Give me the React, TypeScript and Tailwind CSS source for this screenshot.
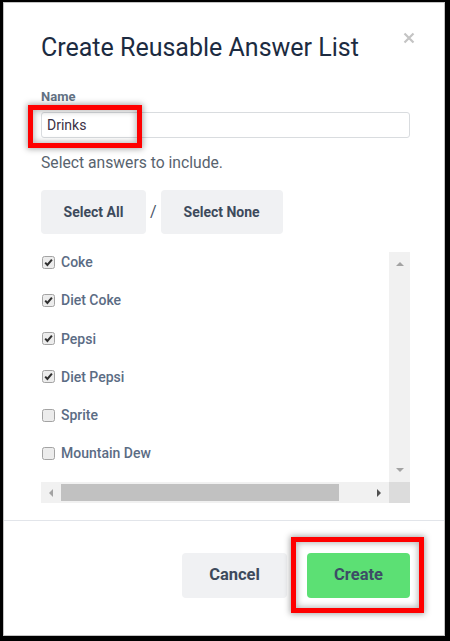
import React from "react";

const answers = [
  { label: "Coke", checked: true },
  { label: "Diet Coke", checked: true },
  { label: "Pepsi", checked: true },
  { label: "Diet Pepsi", checked: true },
  { label: "Sprite", checked: false },
  { label: "Mountain Dew", checked: false },
];

const Checkbox = ({ checked }: { checked: boolean }) => (
  <svg width="13" height="13" viewBox="0 0 13 13" className="shrink-0">
    <rect x="0.5" y="0.5" width="12" height="12" rx="2" fill="#ececec" stroke="#a3a3a3" />
    {checked && (
      <path d="M3.2 6.6 L5.4 9 L9.9 3.6" stroke="#2f2f2f" strokeWidth="2" fill="none" />
    )}
  </svg>
);

const App = () => {
  return (
    <div className="relative w-[450px] h-[641px] bg-black pl-[3px] pr-[5px] pt-[2px] pb-[5px] font-['Roboto',sans-serif]">
      <div className="h-full bg-white border border-[#c4c4c4] flex flex-col">
        {/* Body */}
        <div className="pl-[37px] pr-[34px] pt-[30px]">
          <div className="flex justify-between items-start">
            <h2 className="text-[25px] leading-[29px] text-[#1c2b41]">Create Reusable Answer List</h2>
            <svg width="12" height="12" viewBox="0 0 12 12" className="-mr-[5px] mt-[-1px]">
              <path d="M1.5 1.5 L10.5 10.5 M10.5 1.5 L1.5 10.5" stroke="#c4c4c4" strokeWidth="2.2" />
            </svg>
          </div>

          <label className="block mt-[27px] text-[13px] leading-[16px] font-bold text-[#627183]">Name</label>
          <div className="mt-[7px] h-[26px] border border-[#d9dcdf] rounded-[3px] pl-[5px] flex items-center text-[14px] text-[#3b3145]">
            Drinks
          </div>

          <p className="mt-[15px] text-[15.7px] leading-[20px] text-[#58636e]">Select answers to include.</p>

          <div className="mt-[17px] flex items-center gap-[4px]">
            <button className="w-[105px] h-[44px] rounded-[4px] bg-[#f0f1f3] text-[14px] font-bold text-[#3d4a5c]">
              Select All
            </button>
            <span className="text-[16px] text-[#4a5568]">/</span>
            <button className="w-[122px] h-[44px] rounded-[4px] bg-[#f0f1f3] text-[14px] font-bold text-[#3d4a5c]">
              Select None
            </button>
          </div>

          {/* Scrollable list */}
          <div className="mt-[18px] mb-[17px] grid grid-cols-[1fr_21px] grid-rows-[230px_21px]">
            <div className="flex flex-col">
              {answers.map((a) => (
                <div key={a.label} className="h-[38.3px] flex items-start">
                  <div className="flex items-center gap-[6px] pl-[1px] h-[20px]">
                    <Checkbox checked={a.checked} />
                    <span className="text-[14px] leading-[20px] font-medium text-[#5b6c84]">{a.label}</span>
                  </div>
                </div>
              ))}
            </div>
            <div className="bg-[#f1f1f1] flex flex-col items-center justify-between pt-[10px] pb-[10px]">
              <svg width="8" height="4" viewBox="0 0 8 4">
                <path d="M0 4 L4 0 L8 4 Z" fill="#a3a3a3" />
              </svg>
              <svg width="8" height="4" viewBox="0 0 8 4">
                <path d="M0 0 L4 4 L8 0 Z" fill="#a3a3a3" />
              </svg>
            </div>
            <div className="bg-[#f1f1f1] flex items-center pl-[8px] pr-[8px] gap-[8px]">
              <svg width="4" height="8" viewBox="0 0 4 8" className="shrink-0">
                <path d="M4 0 L0 4 L4 8 Z" fill="#a3a3a3" />
              </svg>
              <div className="h-[17px] w-[278px] bg-[#c1c1c1]" />
              <div className="flex-1" />
              <svg width="4" height="8" viewBox="0 0 4 8" className="shrink-0">
                <path d="M0 0 L4 4 L0 8 Z" fill="#505050" />
              </svg>
            </div>
            <div className="bg-[#dcdcdc]" />
          </div>
        </div>

        {/* Footer */}
        <div className="border-t border-[#e2e5ea] pt-[32px] pr-[34px] flex justify-end gap-[20px]">
          <button className="w-[105px] h-[45px] rounded-[4px] bg-[#f0f1f3] text-[16.5px] font-bold text-[#3d4a5c]">
            Cancel
          </button>
          <button className="w-[103px] h-[45px] rounded-[4px] bg-[#5ce074] text-[16.5px] font-bold text-[#3d4d66]">
            Create
          </button>
        </div>
      </div>

      {/* Annotation boxes */}
      <div className="absolute left-[28px] top-[105px] w-[114px] h-[43px] border-[5px] border-[#ff0000] shadow-[0_0_6px_1px_rgba(0,0,0,0.35),inset_0_0_6px_1px_rgba(0,0,0,0.3)]" />
      <div className="absolute left-[291px] top-[537px] w-[133px] h-[76px] border-[5px] border-[#ff0000] shadow-[0_0_6px_1px_rgba(0,0,0,0.35),inset_0_0_6px_1px_rgba(0,0,0,0.3)]" />
    </div>
  );
};

export default App;
